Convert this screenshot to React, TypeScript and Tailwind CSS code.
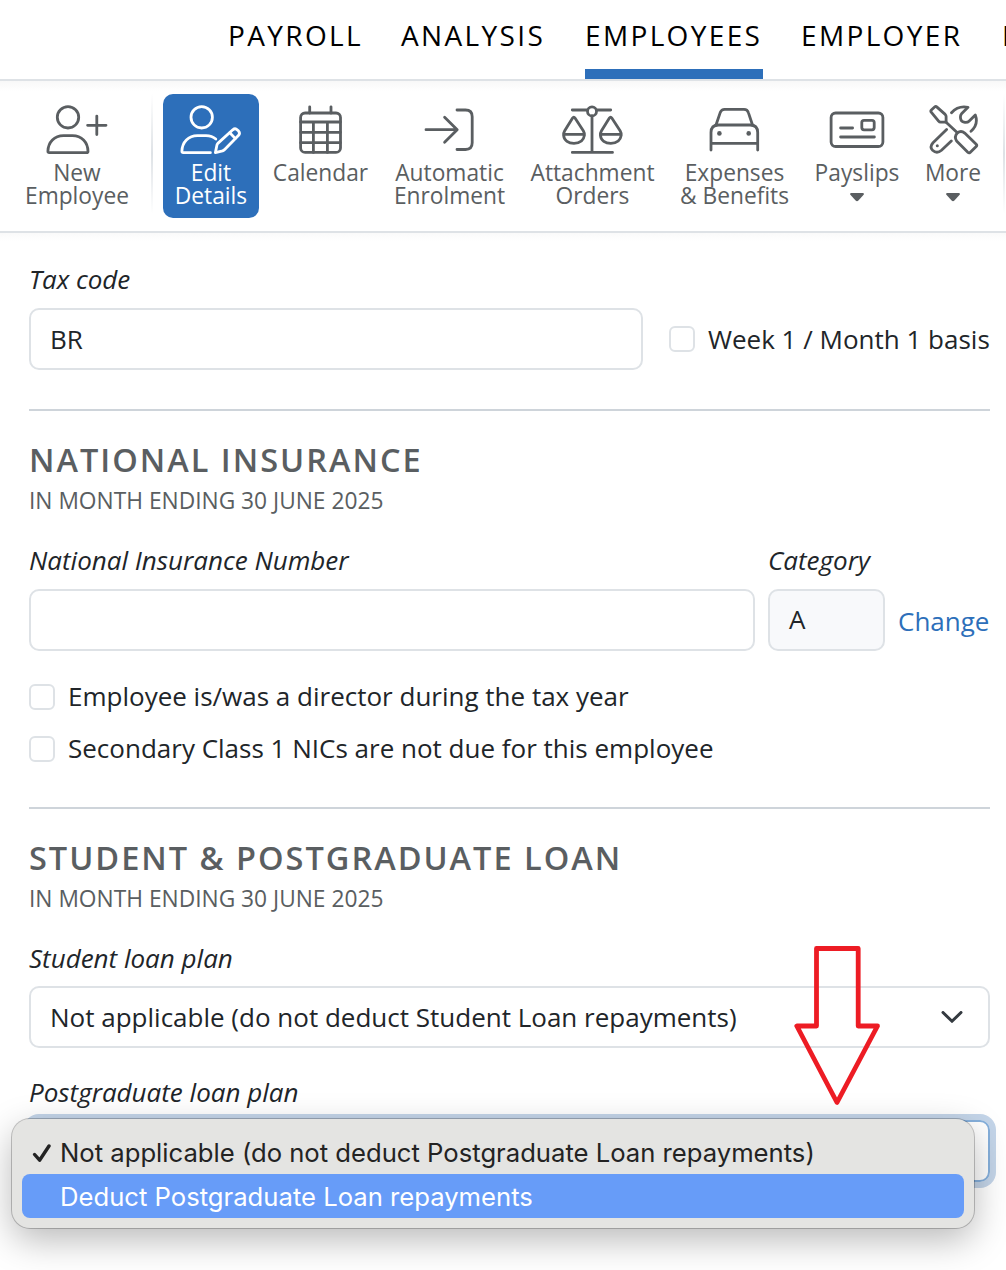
import type { ReactNode } from "react";

const Icon = ({ children, viewBox = "0 0 64 52" }: { children: ReactNode; viewBox?: string }) => (
  <svg
    viewBox={viewBox}
    className="h-[52px] w-16 shrink-0"
    fill="none"
    stroke="currentColor"
    strokeWidth="2.8"
    strokeLinecap="round"
    strokeLinejoin="round"
  >
    {children}
  </svg>
);

const UserPlusIcon = () => (
  <Icon>
    <circle cx="23" cy="13.3" r="10.7" />
    <path d="M2.9 47.3C3.1 38 9.5 31.6 18.5 31.6H27.5C36.5 31.6 42.8 38 43 47.3Q43 48.7 41.7 48.7H4.2Q2.9 48.7 2.9 47.3Z" />
    <path d="M42.6 21.3H61M51.8 12.1V30.5" />
  </Icon>
);

const UserEditIcon = () => (
  <Icon>
    <circle cx="22.7" cy="13.3" r="10.7" />
    <path d="M31.4 48.7H4.2Q2.9 48.7 2.9 47.3C3.1 38 9.5 31.6 18.5 31.6H27Q33 31.8 36.8 35" />
    <path d="M36.4 48.6L38 40.8Q38.2 40 38.8 39.4L53.8 25.8Q56.2 23.8 58.4 25.9L59.6 27.1Q61.5 29.3 59.4 31.6L45.2 45.9Q44.5 46.5 43.6 46.8Z" />
    <path d="M50.8 28.8L56.2 34.4" />
  </Icon>
);

const CalendarIcon = () => (
  <Icon viewBox="1 0 64 52">
    <rect x="12.6" y="9" width="39.9" height="39.4" rx="4.5" />
    <path d="M21.7 2.8V9M43 2.8V9M12.6 18H52.4M12.6 28.3H52.4M12.6 38.7H52.4M25.4 18V48.4M39.4 18V48.4" />
  </Icon>
);

const EnrolIcon = () => (
  <Icon viewBox="1 0 64 52">
    <path d="M9 25.7H40M27.6 13.2L40.2 25.7L27.6 38.2" />
    <path d="M40 6H48.5Q55.2 6 55.2 12.7V38.8Q55.2 45.5 48.5 45.5H40" />
  </Icon>
);

const ScalesIcon = () => (
  <Icon viewBox="1 0 64 52">
    <circle cx="32" cy="7.4" r="4.5" />
    <path d="M12.3 6H27.4M36.6 6H50.7M32 12V48.4M12.3 48.4H52.5" />
    <path d="M12.6 14Q13.8 12.2 15 14L23.3 26.8Q24.6 29 24.4 31.4C23.6 36.6 19.5 39.3 14 39.3S4.2 36.6 3.6 31.4Q3.4 29 4.7 26.8ZM3.8 30.4H24.2" />
    <path d="M49.4 14Q50.6 12.2 51.8 14L60.1 26.8Q61.4 29 61.2 31.4C60.4 36.6 56.3 39.3 50.8 39.3S41 36.6 40.4 31.4Q40.2 29 41.5 26.8ZM40.6 30.4H61" />
  </Icon>
);

const CarIcon = () => (
  <Icon viewBox="1 0 64 52">
    <path d="M14 21L18.2 8.6Q19.4 5.3 22.7 5.3H42Q45.4 5.3 46.4 8.6L50.5 21" />
    <path d="M9 46V28.6Q9 21 16.5 21H48.2Q55.7 21 55.7 28.6V46M9 39.3H55.7" />
    <circle cx="17.4" cy="29.4" r="2.3" fill="currentColor" stroke="none" />
    <circle cx="46.7" cy="29.4" r="2.3" fill="currentColor" stroke="none" />
  </Icon>
);

const PayslipIcon = () => (
  <Icon>
    <rect x="6.1" y="9" width="51.8" height="33.5" rx="4.5" />
    <rect x="36.8" y="16.4" width="12.4" height="9.4" rx="2.2" />
    <path d="M15.6 24H27.6M15.6 33H49.4" />
  </Icon>
);

const ToolsIcon = () => (
  <Icon>
    <path d="M10.6 5.7L13.6 3Q14.8 2 16 3.1L24.2 10.4Q25.1 11.3 25.1 12.4V18.2H19.6Q18.4 18.2 17.6 17.2L10.2 8.2Q9.3 6.9 10.6 5.7Z" />
    <path d="M25.1 18.2L36.4 28.8" />
    <path d="M36.5 28.7Q40.2 26 43.7 29.1L55.2 40.2Q56.3 41.3 55.2 42.4L49.1 48.4Q48 49.4 46.8 48.3L35.6 36.9Q32.8 32.6 36.5 28.7Z" />
    <path d="M25.6 25.4L12 38.7Q8.2 42.9 11.6 46.3Q15.9 50.3 20.5 46.2L30.3 37" />
    <circle cx="16.3" cy="41.7" r="1.5" fill="currentColor" stroke="none" />
    <path d="M30.5 8.7Q37.2 1.3 47 3.3L40.5 9.8Q38.8 11.9 39.8 15.4Q40.5 17.8 43 18.2Q46.4 18.8 48 17.2L54.3 10.9Q57.8 20.2 50 27.2" />
  </Icon>
);

const Caret = () => (
  <svg viewBox="0 0 14 9" className="mt-[9px] h-[9px] w-3.5">
    <path d="M1.4 0H12.6Q14.8.4 13.4 2L8.4 7.6Q7 9 5.6 7.6L.6 2Q-.8.4 1.4 0Z" fill="currentColor" />
  </svg>
);

const tools = [
  { lines: ["Calendar"], icon: <CalendarIcon />, width: "w-[121px]" },
  { lines: ["Automatic", "Enrolment"], icon: <EnrolIcon />, width: "w-[137px]" },
  { lines: ["Attachment", "Orders"], icon: <ScalesIcon />, width: "w-[149px]" },
  { lines: ["Expenses", "& Benefits"], icon: <CarIcon />, width: "w-[135px]" },
  { lines: ["Payslips"], icon: <PayslipIcon />, width: "w-[110px]", caret: true },
  { lines: ["More"], icon: <ToolsIcon />, width: "w-[82px]", caret: true },
];

type ToolProps = {
  lines: string[];
  icon: ReactNode;
  width: string;
  caret?: boolean;
  active?: boolean;
};

const Tool = ({ lines, icon, width, caret, active }: ToolProps) => (
  <div
    className={`${width} flex h-[124px] shrink-0 flex-col items-center rounded-[10px] pt-2.5 text-[22.75px] leading-[23px] whitespace-nowrap ${
      active ? "bg-[#2d6fba] text-white" : "text-[#5a5e61]"
    }`}
  >
    {icon}
    <div className="mt-[5px] text-center">
      {lines.map((line) => (
        <div key={line}>{line}</div>
      ))}
    </div>
    {caret && <Caret />}
  </div>
);

const Separator = () => (
  <div className="h-[120px] w-0.5 shrink-0 bg-linear-to-b from-transparent via-[#dee2e6] to-transparent" />
);

const Label = ({ children }: { children: ReactNode }) => (
  <div className="h-9 leading-9 italic whitespace-nowrap">{children}</div>
);

const Checkbox = ({ label, textClass = "" }: { label: string; textClass?: string }) => (
  <label className="flex h-[26px] items-center gap-[13px] whitespace-nowrap">
    <span className="h-[26px] w-[26px] shrink-0 rounded-md border-2 border-[#dee2e6]" />
    <span className={textClass}>{label}</span>
  </label>
);

const SectionTitle = ({ title }: { title: string }) => (
  <div className="mt-[27px] text-[#5a5e61] whitespace-nowrap">
    <h2 className="h-[45px] text-[32.5px] leading-[44px] font-semibold tracking-[2px]">{title}</h2>
    <p className="h-[35px] text-[22.75px] leading-9">IN MONTH ENDING 30 JUNE 2025</p>
  </div>
);

const NavItem = ({ text, width, active }: { text: string; width: string; active?: boolean }) => (
  <div
    className={`${width} h-[79px] shrink-0 border-b-10 pt-[15px] text-[28px] leading-10 tracking-[2.35px] whitespace-nowrap ${
      active ? "border-[#2d6fba]" : "border-transparent"
    }`}
  >
    {text}
  </div>
);

const App = () => {
  return (
    <div className="relative h-[1270px] w-[1006px] overflow-hidden bg-white font-['Open_Sans',sans-serif] text-[26px] text-[#212529]">
      {/* Main navigation */}
      <nav className="flex h-[81px] gap-[38px] border-b-2 border-[#dee2e6] pl-[228px] text-black">
        <NavItem text="PAYROLL" width="w-[135px]" />
        <NavItem text="ANALYSIS" width="w-[146px]" />
        <NavItem text="EMPLOYEES" width="w-[178px]" active />
        <NavItem text="EMPLOYER" width="w-[163px]" />
        <NavItem text="RTI" width="w-[60px]" />
      </nav>

      {/* Toolbar */}
      <div className="flex h-[152px] border-b-2 border-[#dee2e6] bg-linear-to-b from-[#f8f8f8] to-white to-[10px] pt-[13px] pl-[13px]">
        <Tool lines={["New", "Employee"]} icon={<UserPlusIcon />} width="w-[128px]" />
        <div className="w-2.5 shrink-0" />
        <Separator />
        <div className="w-2.5 shrink-0" />
        <Tool lines={["Edit", "Details"]} icon={<UserEditIcon />} width="w-24" active />
        <div className="w-px shrink-0" />
        {tools.map((tool) => (
          <Tool key={tool.lines[0]} {...tool} />
        ))}
        <div className="w-[9px] shrink-0" />
        <Separator />
      </div>

      {/* Form */}
      <main className="bg-linear-to-b from-[#fafafa] to-white to-[8px] pt-7 pr-4 pl-[29px]">
        <Label>Tax code</Label>
        <div className="mt-[11px] flex items-center gap-[26px]">
          <div className="h-[62px] w-[614px] shrink-0 rounded-[10px] border-2 border-[#dee2e6] bg-white px-[19px] leading-[58px]">
            BR
          </div>
          <Checkbox label="Week 1 / Month 1 basis" />
        </div>

        <hr className="mt-[39px] border-t-2 border-[#ced4da]" />
        <SectionTitle title="NATIONAL INSURANCE" />
        <div className="mt-6 flex gap-[13px]">
          <div className="w-[726px] shrink-0">
            <Label>National Insurance Number</Label>
            <div className="mt-[11px] h-[62px] rounded-[10px] border-2 border-[#dee2e6]" />
          </div>
          <div className="w-[117px] shrink-0">
            <Label>Category</Label>
            <div className="mt-[11px] h-[62px] rounded-[10px] border-2 border-[#dee2e6] bg-[#f8f9fb] pl-[19px] leading-[56px]">
              A
            </div>
          </div>
          <a className="h-[109px] pt-[47px] leading-[65px] text-[#2d6fba]">Change</a>
        </div>
        <div className="mt-[33px] flex flex-col gap-[26px]">
          <Checkbox label="Employee is/was a director during the tax year" textClass="pb-0.5" />
          <Checkbox label="Secondary Class 1 NICs are not due for this employee" textClass="pb-0.5" />
        </div>

        <hr className="mt-[45px] border-t-2 border-[#ced4da]" />
        <SectionTitle title="STUDENT & POSTGRADUATE LOAN" />
        <div className="mt-6">
          <Label>Student loan plan</Label>
          <div className="mt-2.5 flex h-[62px] items-center justify-between rounded-[10px] border-2 border-[#dee2e6] pr-[25px] pl-[19px] whitespace-nowrap">
            <span className="pt-px">Not applicable (do not deduct Student Loan repayments)</span>
            <svg viewBox="0 0 22 12" className="h-3 w-[22px]" fill="none" stroke="#343a40" strokeWidth="3" strokeLinecap="round" strokeLinejoin="round">
              <path d="M2 1.5L11 10.3L20 1.5" />
            </svg>
          </div>
        </div>
        <div className="relative mt-[26px]">
          <Label>Postgraduate loan plan</Label>
          <div className="mt-2.5 h-[62px] rounded-[10px] border-2 border-[#86b0dc] ring-6 ring-[#c4d5e9]" />
          {/* Open select menu */}
          <div className="absolute top-[45px] -left-[17px] h-[109px] w-[962px] rounded-[18px] bg-[#e4e4e2] px-2.5 pt-[11px] font-['Inter',sans-serif] text-[25.65px] whitespace-nowrap text-[#232323] shadow-[0_0_0_1px_rgba(0,0,0,0.22),0_12px_36px_rgba(0,0,0,0.28)]">
            <div className="flex h-11 items-center pt-0.5 pl-2.5">
              <svg viewBox="0 0 19 19" className="mr-[9px] h-[19px] w-[19px]" fill="none" stroke="currentColor" strokeWidth="3.4" strokeLinecap="round" strokeLinejoin="round">
                <path d="M2.6 10.5L7.6 16.2L17 2" />
              </svg>
              Not applicable (do not deduct Postgraduate Loan repayments)
            </div>
            <div className="flex h-11 items-center rounded-lg bg-[#679cf8] pt-0.5 pl-[38px] text-white">
              Deduct Postgraduate Loan repayments
            </div>
          </div>
        </div>
      </main>

      {/* Arrow pointing at the open menu */}
      <svg viewBox="0 0 88 162" className="absolute top-[945px] left-[793px] h-[162px] w-[88px]" fill="none" stroke="#ed1c24" strokeWidth="4.8">
        <path d="M23.5 3.5H65.2V81H84.5L44 157.5L3.8 81H23.5Z" strokeLinejoin="round" />
      </svg>
    </div>
  );
};

export default App;
